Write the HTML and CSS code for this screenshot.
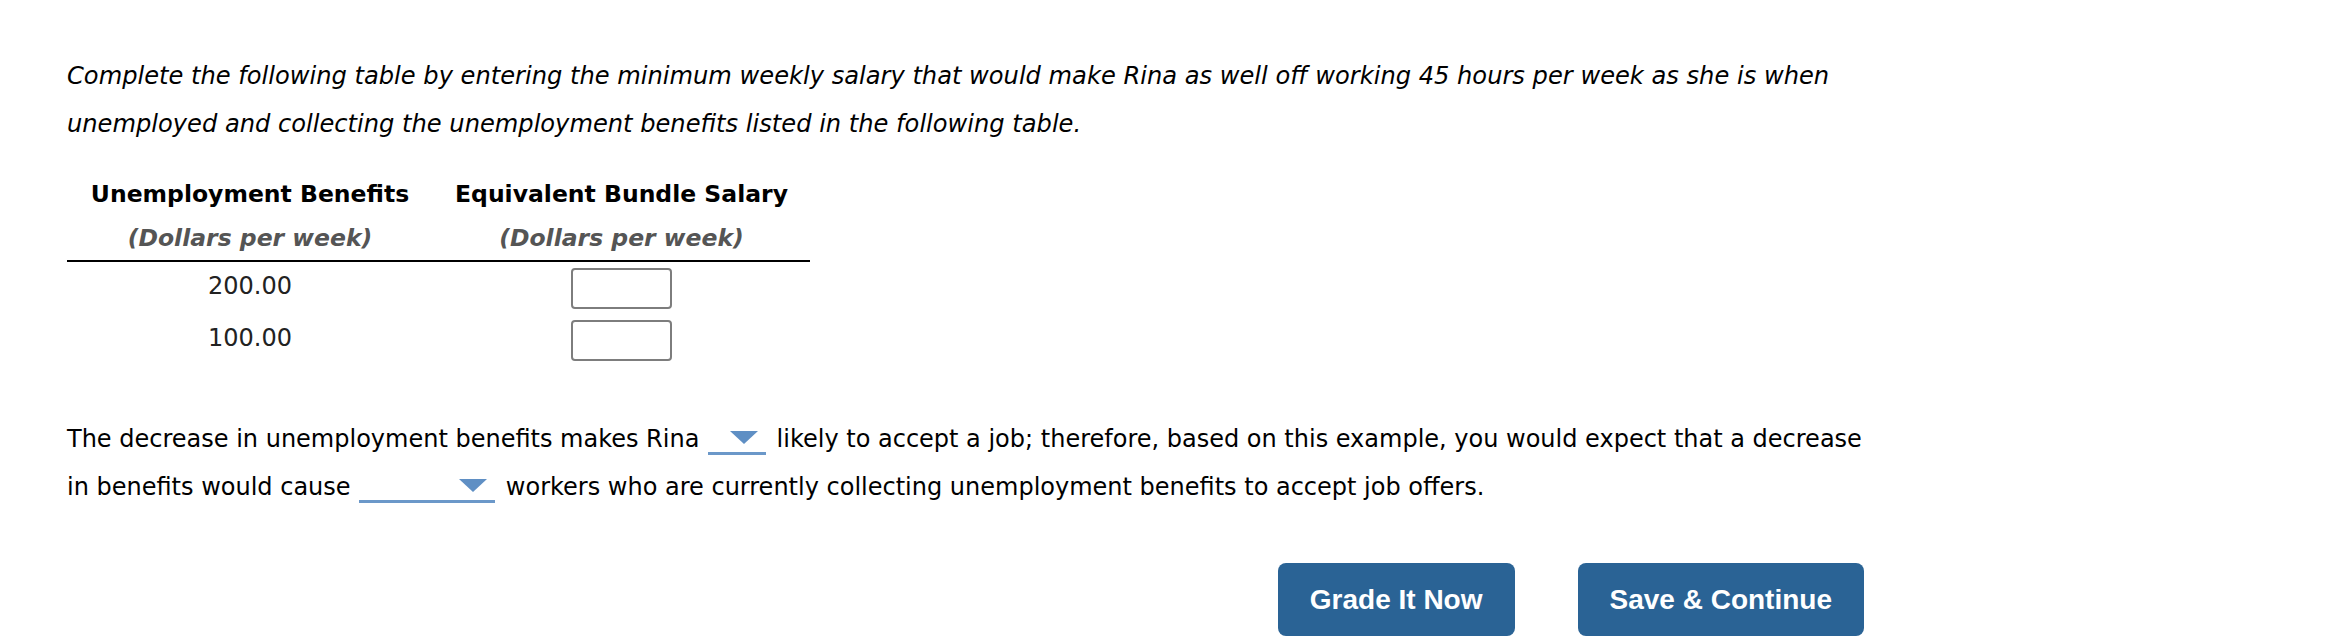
FILE: index.html
```html
<!DOCTYPE html>
<html>
<head>
<meta charset="utf-8">
<link rel="stylesheet" href="styles.css">
</head>
<body>
<div class="page">
  <p class="intro">Complete the following table by entering the minimum weekly salary that would make Rina as well off working 45 hours per week as she is when unemployed and collecting the unemployment benefits listed in the following table.</p>

  <table class="data">
    <thead>
      <tr class="h1">
        <th class="c1">Unemployment Benefits</th>
        <th class="c2">Equivalent Bundle Salary</th>
      </tr>
      <tr class="h2">
        <th>(Dollars per week)</th>
        <th>(Dollars per week)</th>
      </tr>
    </thead>
    <tbody>
      <tr>
        <td class="num">200.00</td>
        <td class="inp"><input class="box" type="text"></td>
      </tr>
      <tr>
        <td class="num">100.00</td>
        <td class="inp"><input class="box" type="text"></td>
      </tr>
    </tbody>
  </table>

  <p class="question">The decrease in unemployment benefits makes Rina <span class="dd dd-short"><span class="tri"></span></span> likely to accept a job; therefore, based on this example, you would expect that a decrease in benefits would cause <span class="dd dd-long"><span class="tri"></span></span> workers who are currently collecting unemployment benefits to accept job offers.</p>

  <div class="actions">
    <button class="btn">Grade It Now</button>
    <button class="btn">Save &amp; Continue</button>
  </div>
</div>
</body>
</html>
```

FILE: styles.css
```css
html, body {
  margin: 0;
  padding: 0;
  background: #ffffff;
}

.page {
  padding: 52px 0 0 67px;
  width: 1810px;
  font-family: "DejaVu Sans", Verdana, sans-serif;
  font-size: 24px;
  color: #000;
}

.intro {
  margin: 0;
  font-style: italic;
  font-size: 24.15px;
  line-height: 48px;
}

.data {
  border-collapse: collapse;
  margin-top: 31px;
}

.data th,
.data td {
  padding: 0;
  text-align: center;
}

.data .c1 { width: 366px; }
.data .c2 { width: 377px; }

.h1 th {
  font-weight: bold;
  font-size: 23.5px;
  line-height: 31px;
  height: 44px;
  vertical-align: top;
}

.h2 th {
  font-weight: bold;
  font-style: italic;
  font-size: 23.5px;
  color: #555;
  line-height: 31px;
  height: 37px;
  vertical-align: top;
  border-bottom: 2px solid #000;
}

.data tbody td {
  vertical-align: middle;
  color: #222;
}

.data td.num {
  height: 47px;
  padding-bottom: 5px;
}

.data td.inp {
  height: 52px;
}

.box {
  display: block;
  margin: 0 auto;
  box-sizing: border-box;
  width: 101px;
  height: 41px;
  border: 2px solid #7d7d7d;
  border-radius: 4px;
  background: #fff;
}

.question {
  margin: 49px 0 0 0;
  line-height: 48px;
}

.dd {
  display: inline-block;
  position: relative;
  height: 22px;
  vertical-align: -8px;
  border-bottom: 3px solid #6b98c9;
  margin: 0 3px 0 1px;
}

.dd-short { width: 58px; }
.dd-long { width: 136px; }

.tri {
  position: absolute;
  right: 8px;
  top: 1px;
  width: 0;
  height: 0;
  border-left: 14px solid transparent;
  border-right: 14px solid transparent;
  border-top: 13px solid #5f8fc4;
}

.actions {
  display: flex;
  justify-content: flex-end;
  gap: 63px;
  margin-top: 52px;
  padding-right: 13px;
}

.btn {
  height: 73px;
  padding: 0 32px;
  border: none;
  border-radius: 8px;
  background: #2a6395;
  color: #fff;
  font-family: "Liberation Sans", Arial, sans-serif;
  font-weight: bold;
  font-size: 28px;
}
```
